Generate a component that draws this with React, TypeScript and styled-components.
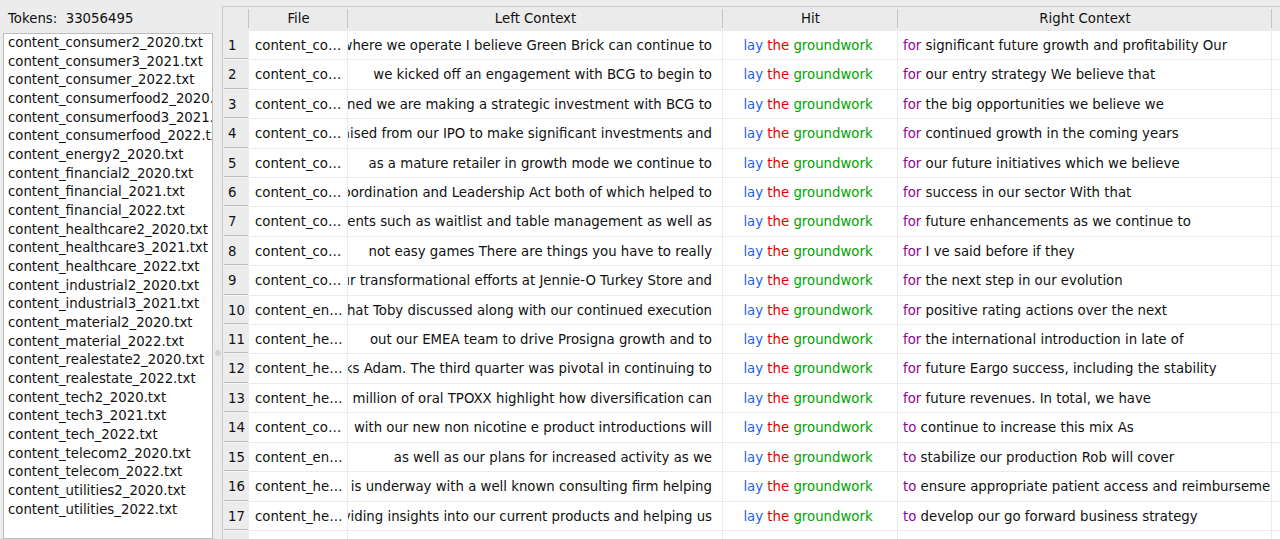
import React, { ReactElement } from "react";
import styled, { createGlobalStyle } from "styled-components";

interface Hit {
  file: string
  left: string
  right: string
  link: string
}

const files = [
  "content_consumer2_2020.txt",
  "content_consumer3_2021.txt",
  "content_consumer_2022.txt",
  "content_consumerfood2_2020.txt",
  "content_consumerfood3_2021.txt",
  "content_consumerfood_2022.txt",
  "content_energy2_2020.txt",
  "content_financial2_2020.txt",
  "content_financial_2021.txt",
  "content_financial_2022.txt",
  "content_healthcare2_2020.txt",
  "content_healthcare3_2021.txt",
  "content_healthcare_2022.txt",
  "content_industrial2_2020.txt",
  "content_industrial3_2021.txt",
  "content_material2_2020.txt",
  "content_material_2022.txt",
  "content_realestate2_2020.txt",
  "content_realestate_2022.txt",
  "content_tech2_2020.txt",
  "content_tech3_2021.txt",
  "content_tech_2022.txt",
  "content_telecom2_2020.txt",
  "content_telecom_2022.txt",
  "content_utilities2_2020.txt",
  "content_utilities_2022.txt",
]

const hits: Hit[] = [
  {file: "content_consumer2_2020.txt", left: "where we operate I believe Green Brick can continue to", link: "for", right: "significant future growth and profitability Our"},
  {file: "content_consumer3_2021.txt", left: "we kicked off an engagement with BCG to begin to", link: "for", right: "our entry strategy We believe that"},
  {file: "content_consumer_2022.txt", left: "As we mentioned we are making a strategic investment with BCG to", link: "for", right: "the big opportunities we believe we"},
  {file: "content_consumerfood2_2020.txt", left: "the capital we raised from our IPO to make significant investments and", link: "for", right: "continued growth in the coming years"},
  {file: "content_consumerfood3_2021.txt", left: "as a mature retailer in growth mode we continue to", link: "for", right: "our future initiatives which we believe"},
  {file: "content_consumerfood_2022.txt", left: "the Coordination and Leadership Act both of which helped to", link: "for", right: "success in our sector With that"},
  {file: "content_consumer2_2020.txt", left: "key components such as waitlist and table management as well as", link: "for", right: "future enhancements as we continue to"},
  {file: "content_consumer3_2021.txt", left: "not easy games There are things you have to really", link: "for", right: "I ve said before if they"},
  {file: "content_consumerfood_2022.txt", left: "continue our transformational efforts at Jennie-O Turkey Store and", link: "for", right: "the next step in our evolution"},
  {file: "content_energy2_2020.txt", left: "the work that Toby discussed along with our continued execution", link: "for", right: "positive rating actions over the next"},
  {file: "content_healthcare2_2020.txt", left: "out our EMEA team to drive Prosigna growth and to", link: "for", right: "the international introduction in late of"},
  {file: "content_healthcare3_2021.txt", left: "Thanks Adam. The third quarter was pivotal in continuing to", link: "for", right: "future Eargo success, including the stability"},
  {file: "content_healthcare_2022.txt", left: "million of oral TPOXX highlight how diversification can", link: "for", right: "future revenues. In total, we have"},
  {file: "content_consumer_2022.txt", left: "with our new non nicotine e product introductions will", link: "to", right: "continue to increase this mix As"},
  {file: "content_energy2_2020.txt", left: "as well as our plans for increased activity as we", link: "to", right: "stabilize our production Rob will cover"},
  {file: "content_healthcare2_2020.txt", left: "is underway with a well known consulting firm helping", link: "to", right: "ensure appropriate patient access and reimbursement"},
  {file: "content_healthcare3_2021.txt", left: "providing insights into our current products and helping us", link: "to", right: "develop our go forward business strategy"},
]

const App = (): ReactElement => (
  <>
    <GlobalStyle />
    <Page>
      <LeftPanel>
        <TokensLabel>Tokens:&nbsp; 33056495</TokensLabel>
        <FileList>
          {files.map((f) => <FileItem key={f}>{f}</FileItem>)}
        </FileList>
      </LeftPanel>
      <Splitter>
        <Grip />
      </Splitter>
      <TablePanel>
        <HeaderRow>
          <HeaderCell />
          <HeaderCell>File</HeaderCell>
          <HeaderCell>Left Context</HeaderCell>
          <HeaderCell>Hit</HeaderCell>
          <HeaderCell>Right Context</HeaderCell>
          <HeaderCell $last />
        </HeaderRow>
        {hits.map((h, i) => (
          <Row key={i}>
            <NumCell>{i + 1}</NumCell>
            <FileCell>{h.file}</FileCell>
            <LeftCell><span>{h.left}</span></LeftCell>
            <HitCell>
              <Word $color="#1f5fe8">lay</Word> <Word $color="#e00000">the</Word> <Word $color="#00a400">groundwork</Word>
            </HitCell>
            <RightCell><Word $color="#960096">{h.link}</Word> {h.right}</RightCell>
            <FillCell />
          </Row>
        ))}
        <Row>
          <NumCell />
          <FileCell />
          <LeftCell />
          <HitCell />
          <RightCell />
          <FillCell />
        </Row>
      </TablePanel>
    </Page>
  </>
)

export default App

const GlobalStyle = createGlobalStyle`
  html, body {
    margin: 0;
    padding: 0;
    background: #ececec;
    overflow: hidden;
  }
  body {
    font-family: "DejaVu Sans", "Liberation Sans", sans-serif;
    font-size: 13.3px;
    color: #111;
  }
`

const Page = styled.div`
  display: flex;
  flex-direction: row;
  width: 1280px;
  height: 539px;
  overflow: hidden;
`

const LeftPanel = styled.div`
  display: flex;
  flex-direction: column;
  width: 210px;
  margin-left: 3px;
  flex: none;
`

const TokensLabel = styled.div`
  height: 33px;
  line-height: 37px;
  padding-left: 5px;
  white-space: nowrap;
`

const FileList = styled.div`
  flex: 1;
  background: #fff;
  border: 1px solid #bdbdbd;
  padding: 0 0 0 4px;
  overflow: hidden;
`

const FileItem = styled.div`
  height: 18.68px;
  line-height: 17px;
  white-space: nowrap;
  overflow: hidden;
`

const Splitter = styled.div`
  width: 9px;
  flex: none;
  display: flex;
  flex-direction: column;
  align-items: center;
`

const Grip = styled.div`
  width: 6px;
  height: 6px;
  border-radius: 50%;
  background: #d2d2d2;
  margin-top: 350px;
`

const TablePanel = styled.div`
  flex: 1;
  margin-top: 6px;
  border-top: 1px solid #c9c9c9;
  border-left: 1px solid #c9c9c9;
  display: flex;
  flex-direction: column;
  overflow: hidden;
`

const columns = "26px 99px 375px 175px 374px 1fr"

const HeaderRow = styled.div`
  display: grid;
  grid-template-columns: ${columns};
  height: 24px;
  flex: none;
`

const HeaderCell = styled.div<{ $last?: boolean }>`
  background: ${(p) => p.$last
    ? "#ebebeb"
    : "linear-gradient(#c5c5c5, #c5c5c5) right 0 top 2px / 1px 19px no-repeat, #ebebeb"};
  text-align: center;
  line-height: 24px;
  white-space: nowrap;
  overflow: hidden;
`

const Row = styled.div`
  display: grid;
  grid-template-columns: ${columns};
  height: 29.42px;
  flex: none;
`

const Cell = styled.div`
  background: #fff;
  border-bottom: 1px solid #ebebeb;
  border-right: 1px solid #ebebeb;
  line-height: 30px;
  white-space: nowrap;
  overflow: hidden;
`

const NumCell = styled(Cell)`
  background: linear-gradient(#bdbdbd, #bdbdbd) left 1px bottom 0 / 24px 1px no-repeat, #ececec;
  border-bottom: 1px solid #f4f4f4;
  border-right: none;
  padding-left: 5px;
`

const FileCell = styled(Cell)`
  padding: 0 1px 0 6px;
  text-overflow: ellipsis;
`

const LeftCell = styled(Cell)`
  display: flex;
  justify-content: flex-end;
  padding-right: 10px;
`

const HitCell = styled(Cell)`
  text-align: center;
  padding-right: 4px;
`

const RightCell = styled(Cell)`
  padding-left: 5px;
`

const FillCell = styled(Cell)`
  border-right: none;
`

const Word = styled.span<{ $color: string }>`
  color: ${(p) => p.$color};
`
